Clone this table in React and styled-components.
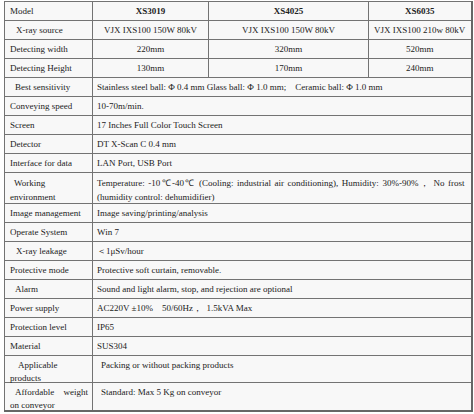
import React from "react";
import styled, { createGlobalStyle } from "styled-components";

const Global = createGlobalStyle`
  html, body { margin: 0; padding: 0; background: #ffffff; }
`;

const Page = styled.div`
  padding: 1px 3px 0 4px;
  font-family: "Liberation Serif", "Times New Roman", serif;
  color: #222;
`;

const Table = styled.table`
  width: 467px;
  table-layout: fixed;
  border-collapse: collapse;
  border: 1px solid #666;
  border-right-width: 2px;
  border-bottom-width: 2px;
  background: #f8f8f8;
  font-family: "Liberation Serif", "Times New Roman", serif;
  font-size: 9px;
  line-height: 12px;
`;

const Row = styled.tr`
  height: ${(p) => p.$h || 19}px;
`;

const Cell = styled.td`
  border: 1px solid #737373;
  font-family: "Liberation Serif", "Times New Roman", serif;
  padding: ${(p) => (p.$top ? "3px" : "0")} 4px ${(p) => (p.$top ? "0" : "1px")}
    ${(p) => 5 + (p.$indent || 0)}px;
  vertical-align: ${(p) => (p.$top ? "top" : "middle")};
  text-align: ${(p) => (p.$center ? "center" : "left")};
  font-weight: ${(p) => (p.$bold ? 700 : 400)};
  white-space: nowrap;
  overflow: ${(p) => (p.$top ? "visible" : "hidden")};
`;

const ValueCell = styled(Cell)`
  padding-left: ${(p) => 4 + (p.$indent || 0)}px;
  padding-right: ${(p) => (p.$top ? 6 : 4)}px;
`;

const Para = styled.div`
  height: ${(p) => p.$h}px;
  line-height: ${(p) => p.$lh || 14}px;
  white-space: normal;
  text-align: justify;
  text-align-last: left;
  text-indent: ${(p) => p.$textIndent || 0}px;
`;

const rows3 = [
  { label: "X-ray source", indent: 6, vals: ["VJX IXS100 150W 80kV", "VJX IXS100 150W 80kV", "VJX IXS100 210w 80kV"] },
  { label: "Detecting width", vals: ["220mm", "320mm", "520mm"] },
  { label: "Detecting Height", vals: ["130mm", "170mm", "240mm"] },
];

const rowsSpan = [
  { label: "Best sensitivity", indent: 5, val: "Stainless steel ball: Φ 0.4 mm Glass ball: Φ 1.0 mm;\u00a0\u00a0\u00a0 Ceramic ball: Φ 1.0 mm" },
  { label: "Conveying speed", val: "10-70m/min." },
  { label: "Screen", val: "17 Inches Full Color Touch Screen" },
  { label: "Detector", val: "DT X-Scan C 0.4 mm" },
  { label: "Interface for data", val: "LAN Port, USB Port" },
  {
    label: "Working environment",
    textIndent: 4,
    h: 31,
    lh: 14,
    top: true,
    val: "Temperature: -10℃-40℃ (Cooling: industrial air conditioning), Humidity: 30%-90%， No frost (humidity control: dehumidifier)",
  },
  { label: "Image management", val: "Image saving/printing/analysis" },
  { label: "Operate System", val: "Win 7" },
  { label: "X-ray leakage", indent: 6, val: "＜1μSv/hour" },
  { label: "Protective mode", val: "Protective soft curtain, removable." },
  { label: "Alarm", indent: 5, val: "Sound and light alarm, stop, and rejection are optional" },
  { label: "Power supply", val: "AC220V ±10%\u00a0\u00a0\u00a0 50/60Hz，\u00a0 1.5kVA Max" },
  { label: "Protection level", val: "IP65" },
  { label: "Material", val: "SUS304" },
  { label: "Applicable products", textIndent: 8, h: 27, lh: 13, top: true, valIndent: 4, val: "Packing or without packing products" },
  { label: "Affordable weight on conveyor", textIndent: 5, h: 28, lh: 13, top: true, valIndent: 4, val: "Standard: Max 5 Kg on conveyor" },
];

export default function App() {
  return (
    <Page>
      <Global />
      <Table>
        <colgroup>
          <col style={{ width: 88 }} />
          <col style={{ width: 116 }} />
          <col style={{ width: 160 }} />
          <col style={{ width: 103 }} />
        </colgroup>
        <tbody>
          <Row>
            <Cell>Model</Cell>
            <ValueCell $center $bold>XS3019</ValueCell>
            <ValueCell $center $bold>XS4025</ValueCell>
            <ValueCell $center $bold>XS6035</ValueCell>
          </Row>
          {rows3.map((r) => (
            <Row key={r.label}>
              <Cell $indent={r.indent}>{r.label}</Cell>
              {r.vals.map((v, i) => (
                <ValueCell key={i} $center>
                  {v}
                </ValueCell>
              ))}
            </Row>
          ))}
          {rowsSpan.map((r) =>
            r.top ? (
              <Row key={r.label} $h={r.h}>
                <Cell $top>
                  <Para $h={r.h - 4} $lh={r.lh} $textIndent={r.textIndent}>
                    {r.label}
                  </Para>
                </Cell>
                <ValueCell colSpan={3} $top $indent={r.valIndent}>
                  <Para $h={r.h - 4} $lh={r.lh}>
                    {r.val}
                  </Para>
                </ValueCell>
              </Row>
            ) : (
              <Row key={r.label}>
                <Cell $indent={r.indent}>{r.label}</Cell>
                <ValueCell colSpan={3}>{r.val}</ValueCell>
              </Row>
            )
          )}
        </tbody>
      </Table>
    </Page>
  );
}
